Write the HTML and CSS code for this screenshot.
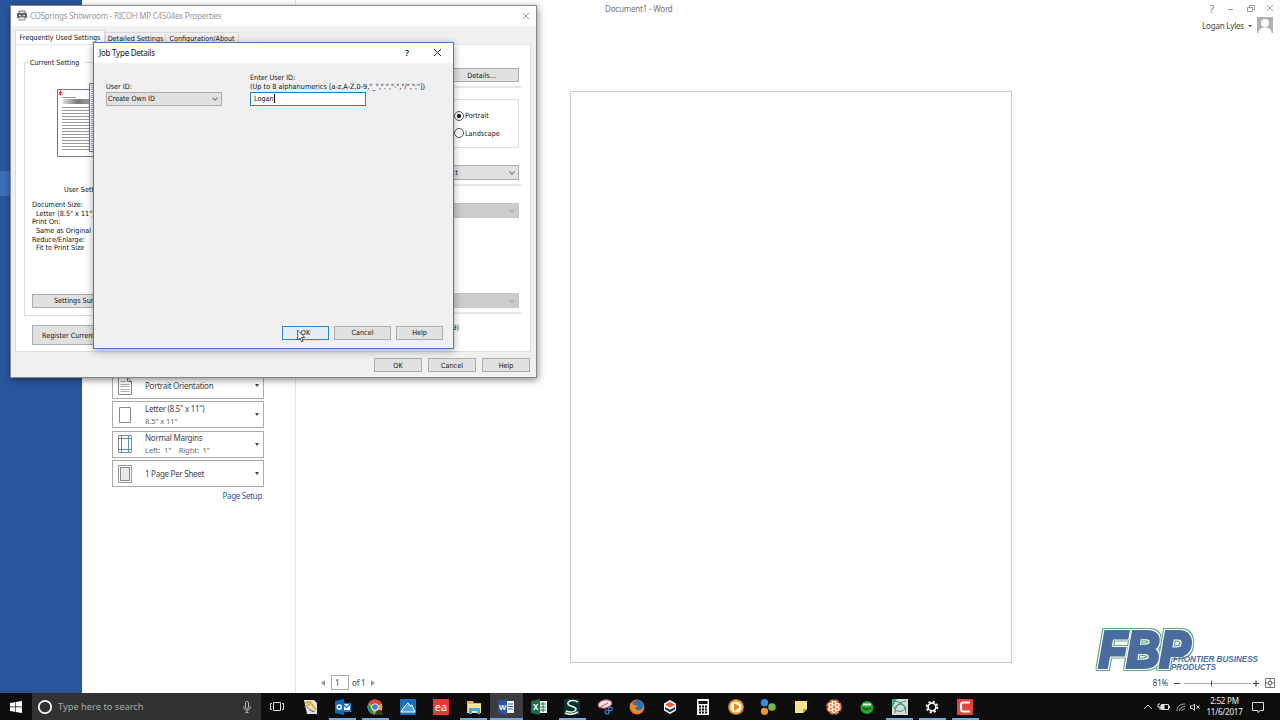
FILE: index.html
```
<!DOCTYPE html>
<html lang="en">

<head>
    <title>Document1 - Word</title>
    <meta http-equiv="content-type" content="text/html; charset=utf-8" />
    <link rel="stylesheet" href="styles.css">
</head>

<body>
    <div class="word">
        <div class="sidebar"><div class="sidebar-sel"></div></div>

        <div class="settings">
            <div class="opt">
                <svg width="16" height="20" viewBox="0 0 16 20"><path d="M1.500 1.500h9l4 4v13h-13z" fill="#fff" stroke="#888"/><path d="M10.500 1.500v4h4" fill="none" stroke="#777"/><path d="M3.500 5.500h5M3.500 8.500h9M3.500 10.500h9M3.500 13.500h9M3.500 15.500h9" stroke="#aaa"/></svg>
                <div class="opt-text">Portrait Orientation</div>
                <i class="arrow"></i>
            </div>
            <div class="opt">
                <svg width="16" height="20" viewBox="0 0 16 20"><path d="M2.500 2.500h11v15h-11z" fill="#fff" stroke="#8a8a8a"/></svg>
                <div class="opt-text">Letter (8.5" x 11")<small>8.5" x 11"</small></div>
                <i class="arrow"></i>
            </div>
            <div class="opt">
                <svg width="16" height="20" viewBox="0 0 16 20"><path d="M1.500 1.500h13v17h-13z" fill="#fff" stroke="#8a8a8a"/><path d="M4.500 1v18M11.500 1v18M1 4.500h14M1 15.500h14" stroke="#5b88b5"/></svg>
                <div class="opt-text">Normal Margins<small>Left:&nbsp; 1"&nbsp;&nbsp;&nbsp; Right:&nbsp; 1"</small></div>
                <i class="arrow"></i>
            </div>
            <div class="opt">
                <svg width="16" height="20" viewBox="0 0 16 20"><path d="M1.500 1.500h13v17h-13z" fill="#fff" stroke="#999"/><path d="M3.500 3.500h9v13h-9z" fill="#e8e8e8" stroke="#888"/></svg>
                <div class="opt-text">1 Page Per Sheet</div>
                <i class="arrow"></i>
            </div>
            <div class="page-setup">Page Setup</div>
        </div>

        <div class="preview">
            <div class="word-title">
                <span class="doc-name">Document1 - Word</span>
                <span class="help">?</span>
                <svg width="50" height="10" viewBox="0 0 50 10" fill="none" stroke="#999"><path d="M1 5.500h5M20.500 3.500h5v4h-5zM22.500 3.500v-2h5v4h-2M40 1l6 6M46 1l-6 6"/></svg>
            </div>
            <div class="account">
                <span>Logan Lyles</span>
                <i class="arrow small"></i>
                <svg width="16" height="16" viewBox="0 0 16 16"><path d="M0 0h16v16H0z" fill="#b1b1b1"/><circle cx="8" cy="6" r="3.900" fill="#fff"/><path d="M1.500 16c0-4 3-5.500 6.500-5.500s6.500 1.500 6.500 5.500z" fill="#fff"/></svg>
            </div>
            <div class="paper"></div>
            <svg class="brand" width="168" height="46" viewBox="0 0 168 46">
                <defs>
                    <filter id="outline" x="-10%" y="-10%" width="120%" height="120%" color-interpolation-filters="sRGB">
                        <feMorphology in="SourceAlpha" operator="dilate" radius="2" result="big"/>
                        <feMorphology in="SourceAlpha" operator="dilate" radius="1" result="mid"/>
                        <feFlood flood-color="#5fa982"/><feComposite in2="big" operator="in" result="green"/>
                        <feFlood flood-color="#fff"/><feComposite in2="mid" operator="in" result="white"/>
                        <feMerge><feMergeNode in="green"/><feMergeNode in="white"/><feMergeNode in="SourceGraphic"/></feMerge>
                    </filter>
                </defs>
                <text class="brand-big" x="5" y="39.500" textLength="91" lengthAdjust="spacingAndGlyphs" filter="url(#outline)">FBP</text>
                <text class="brand-sub" x="79" y="35" textLength="85" lengthAdjust="spacingAndGlyphs">FRONTIER BUSINESS</text>
                <text class="brand-sub" x="77" y="43" textLength="45" lengthAdjust="spacingAndGlyphs">PRODUCTS</text>
            </svg>
            <div class="status">
                <i class="tri left"></i><span class="page-no">1</span><span>of 1</span><i class="tri"></i>
                <span class="zoom">81%</span>
                <svg width="96" height="12" viewBox="0 0 96 12"><path d="M0 6.500h6M79 6.500h6M82 3.500v6" stroke="#444" stroke-width="1.200"/><path d="M10 6.500h67" stroke="#aaa"/><path d="M37.500 3.500v6" stroke="#555"/></svg>
                <svg width="10" height="10" viewBox="0 0 10 10"><path d="M.5.500h9v9h-9z" fill="#fff" stroke="#777"/><path d="M3.500 3.500h3v3h-3zM5 1v2M5 7v2M1 5h2M7 5h2" stroke="#777" fill="none"/></svg>
            </div>
        </div>
    </div>

    <!-- printer properties -->
    <div class="win props">
        <div class="win-title">
            <svg width="12" height="11" viewBox="0 0 12 11"><path d="M3 1h6v3H3z" fill="#ddd" stroke="#777"/><path d="M1 3h10v5H1z" fill="#666"/><path d="M3 7h6v3H3z" fill="#eee" stroke="#888"/><path d="M3 5.500h2M7 5.500h2" stroke="#ddd"/></svg>
            <span>COSprings Showroom - RICOH MP C4504ex Properties</span>
            <svg width="8" height="8" viewBox="0 0 8 8"><path d="M1 1l6 6M7 1l-6 6" stroke="#999"/></svg>
        </div>
        <div class="tabs">
            <div class="tab active">Frequently Used Settings</div>
            <div class="tab t2">Detailed Settings</div>
            <div class="tab t3">Configuration/About</div>
        </div>
        <div class="panel">
            <div class="panel-left">
                <div class="group">
                    <div class="legend">Current Setting</div>
                    <svg class="thumb" width="60" height="76" viewBox="0 0 60 76">
                        <defs><linearGradient id="bar"><stop offset="0" stop-color="#ddd"/><stop offset=".5" stop-color="#777"/><stop offset="1" stop-color="#aaa"/></linearGradient></defs>
                        <path d="M.5 6.500h50v67H.5z" fill="#fff" stroke="#77778c"/>
                        <path d="M5 14.500h14" stroke="#999"/>
                        <path d="M6 16h30v5H6z" fill="url(#bar)"/>
                        <path d="M5 24.500h27M5 27.500h27M5 30.500h27M5 33.500h27M5 36.500h27M5 39.500h27M5 42.500h27M5 45.500h27M5 48.500h27M5 51.500h27M5 54.500h27M5 57.500h27M5 60.500h27M5 63.500h27M5 66.500h27" stroke="#9a9a9a"/>
                        <path d="M3.500 7.500v5M1.500 9l4 2.500M5.500 9l-4 2.500" stroke="#d33"/>
                        <path d="M32.500.5h20v68h-20z" fill="#fff" stroke="#778"/>
                        <path d="M35 2v66" stroke="#3b78c4" stroke-dasharray="1 1"/>
                    </svg>
                    <div class="user-set">User Setting</div>
                    <dl>
                        <dt>Document Size:</dt><dd>Letter (8.5" x 11")</dd>
                        <dt>Print On:</dt><dd>Same as Original Size</dd>
                        <dt>Reduce/Enlarge:</dt><dd>Fit to Print Size</dd>
                    </dl>
                    <div class="btn summary">Settings Summary...</div>
                </div>
                <div class="btn register">Register Current Settings...</div>
            </div>
            <div class="panel-right">
                <div class="btn details">Details...</div>
                <hr>
                <div class="orient">
                    <div class="radio on">Portrait</div>
                    <div class="radio">Landscape</div>
                </div>
                <div class="select s1"><span>Select</span><i class="chev"></i></div>
                <hr>
                <div class="select off s2"><i class="chev"></i></div>
                <div class="select off s3"><i class="chev"></i></div>
                <hr>
                <div class="copies">(1 to 999)</div>
            </div>
        </div>
        <div class="buttons">
            <div class="btn">OK</div>
            <div class="btn">Cancel</div>
            <div class="btn">Help</div>
        </div>
    </div>

    <!-- job type details -->
    <div class="win job">
        <div class="win-title">
            <span>Job Type Details</span>
            <b>?</b>
            <svg width="9" height="9" viewBox="0 0 9 9"><path d="M1 1l7 7M8 1l-7 7" stroke="#222"/></svg>
        </div>
        <div class="fields">
            <div class="field">
                <label>User ID:</label>
                <div class="select"><span>Create Own ID</span><i class="chev"></i></div>
            </div>
            <div class="field">
                <label>Enter User ID:<br><span class="hint">(Up to 8 alphanumerics [a-z,A-Z,0-9,"_",".","-","/",":"])</span></label>
                <div class="input">Logan</div>
            </div>
        </div>
        <div class="buttons">
            <div class="btn focus">OK</div>
            <div class="btn wide">Cancel</div>
            <div class="btn">Help</div>
        </div>
    </div>
    <svg class="cursor" width="9" height="14" viewBox="0 0 9 14"><path d="M.7 1v10l2.200-2 1.700 3.900 1.700-.8-1.700-3.600h3.200z" fill="#fff" stroke="#333" stroke-width=".8"/></svg>

    <div class="taskbar">
        <div class="start"><svg width="12" height="12" viewBox="0 0 12 12"><path d="M0 2l5-.8v4.400H0zM5.600 1.100L12 0v5.600H5.600zM0 6.200h5v4.500L0 10zM5.600 6.200H12V12l-6.400-1z" fill="#fff"/></svg></div>
        <div class="search">
            <svg width="16" height="16" viewBox="0 0 16 16"><circle cx="8" cy="8" r="6.200" fill="none" stroke="#fff" stroke-width="1.700"/></svg>
            <span>Type here to search</span>
            <svg width="8" height="12" viewBox="0 0 8 12" fill="none" stroke="#bbb"><rect x="2.500" y=".5" width="3" height="7" rx="1.200"/><path d="M.7 5.500c0 5 6.600 5 6.600 0M4 9v2.500M2.500 11.500h3"/></svg>
        </div>
        <div class="apps">
            <div class="app"><svg viewBox="0 0 16 16"><path d="M4.500 3.500h7v8h-7zM3 4.500H1.500v6H3M13 4.500h1.500v6H13" fill="none" stroke="#ddd"/></svg></div>
            <div class="app"><svg viewBox="0 0 16 16"><path d="M2 1h10l3 3v11H5z" fill="#e6e2dc"/><path d="M3 4l5-1 6 8M3 8l5-3" stroke="#e8a52a" stroke-width="2" fill="none"/><path d="M5 8l6 5M8 11l5 2" stroke="#776"/></svg></div>
            <div class="app run"><svg viewBox="0 0 16 16"><path d="M6 4h10v9H6z" fill="#1c7bd0"/><path d="M8 5h7v6H8z" fill="#fff"/><path d="M8 5l3.500 3.500L15 5" stroke="#1c7bd0" stroke-width="1.500" fill="none"/><path d="M0 2l9-2v16l-9-2z" fill="#0b6cc0"/><circle cx="4.300" cy="8" r="2.100" fill="none" stroke="#fff" stroke-width="1.500"/></svg></div>
            <div class="app run"><svg viewBox="0 0 16 16"><circle cx="8" cy="8" r="7.500" fill="#ddae29"/><path d="M1.500 4.200a7.500 7.500 0 0 1 13 0L8 8z" fill="#dc4638"/><path d="M1.500 4.200L6 12l2 3.500A7.500 7.500 0 0 1 1.500 4.200z" fill="#25985a"/><path d="M8 4.500h6.700L8 8z" fill="#dc4638"/><circle cx="8" cy="8" r="3.600" fill="#fff"/><circle cx="8" cy="8" r="2.800" fill="#3a80da"/><path d="M8 15c1-5 7-5 8-1v2H8z" fill="#3b302a"/></svg></div>
            <div class="app"><svg viewBox="0 0 16 16"><rect width="16" height="16" rx="1" fill="#1672b9"/><path d="M1 13l3-5 4-4 2 3 2-1 3 7z" fill="#4aa3dd" stroke="#fff"/></svg></div>
            <div class="app"><svg viewBox="0 0 16 16"><path d="M0 0h16v16H0z" fill="#e23b36"/><text x="8" y="11.500" text-anchor="middle" font-size="11" fill="#fff">ea</text></svg></div>
            <div class="app run"><svg viewBox="0 0 16 16"><path d="M1 2h6l1 2h7v10H1z" fill="#e9b94d"/><path d="M2 5h13v9H2z" fill="#fbe596"/><path d="M3 9h11v6h-3v-3H6v3H3z" fill="#4aa6df"/></svg></div>
            <div class="app run current"><svg viewBox="0 0 16 16"><path d="M8 2h8v12H8z" fill="#fff"/><path d="M10 5h5M10 7.500h5M10 10h5" stroke="#2b579a"/><path d="M0 2l9-2v16l-9-2z" fill="#2b579a"/><text x="4.600" y="11" text-anchor="middle" font-size="7.500" font-weight="700" fill="#fff">W</text></svg></div>
            <div class="app"><svg viewBox="0 0 16 16"><path d="M8 2h8v12H8z" fill="#fff"/><path d="M9 5h6M9 8h6M9 11h6M12 3v10" stroke="#217346"/><path d="M0 2l9-2v16l-9-2z" fill="#1d7044"/><text x="4.600" y="11" text-anchor="middle" font-size="8" font-weight="700" fill="#fff">X</text></svg></div>
            <div class="app run"><svg viewBox="0 0 16 16"><path d="M0 0h16v16H0z" fill="#093330"/><path d="M14 3C9 0 3 2 4 5s8 2 8 5-6 4-10 2M1 14c4 2 8 2 13-1" stroke="#e8f5f2" stroke-width="1.500" fill="none"/></svg></div>
            <div class="app"><svg viewBox="0 0 16 16"><ellipse cx="8" cy="5" rx="7" ry="4" fill="#f2e8ea" stroke="#c24a5a" transform="rotate(-12 8 5)"/><path d="M2 9l9-5" stroke="#c24a5a"/><circle cx="10" cy="13" r="2" fill="none" stroke="#3a8fd8" stroke-width="1.200"/><circle cx="13.500" cy="10" r="1.800" fill="none" stroke="#3a8fd8" stroke-width="1.200"/></svg></div>
            <div class="app"><svg viewBox="0 0 16 16"><circle cx="8" cy="8" r="7.500" fill="#e66b1e"/><circle cx="9" cy="6.500" r="5.500" fill="#2b71b8"/><path d="M1 5c2-1 3 0 4 1l4 1-3 2c2 4 6 3 9-2-.5 10-14 10-14-2z" fill="#f08a24"/></svg></div>
            <div class="app"><svg viewBox="0 0 16 16"><path d="M8 1l6 3.500v7L8 15l-6-3.500v-7z" fill="#fff"/><path d="M8 3l5 2.700L8 8.500 3 5.700z" fill="#e2613c"/><path d="M3 8l5 2.800L13 8v2.500L8 13.300l-5-2.800z" fill="#24365e"/></svg></div>
            <div class="app"><svg viewBox="0 0 16 16"><path d="M2 0h12v16H2z" fill="#f5f5f5"/><path d="M3.500 2h9v3h-9z" fill="#111"/><path d="M4 7.500h8M4 10.500h8M4 13.500h8" stroke="#111" stroke-width="1.800" stroke-dasharray="2 1"/></svg></div>
            <div class="app"><svg viewBox="0 0 16 16"><circle cx="8" cy="8" r="7.800" fill="#f29423"/><circle cx="8" cy="8" r="5.600" fill="#fff"/><path d="M6 4l6 4-6 4z" fill="#ee8416"/></svg></div>
            <div class="app"><svg viewBox="0 0 16 16"><circle cx="4.500" cy="3.800" r="3.700" fill="#2d8fdd"/><circle cx="12" cy="8" r="3.800" fill="#76b947"/><circle cx="4.500" cy="12.300" r="3.600" fill="#f0932d"/></svg></div>
            <div class="app"><svg viewBox="0 0 16 16"><path d="M2 2h12v8l-4 4H2z" fill="#f4e38e"/><path d="M10 14v-4h4z" fill="#b9a752"/></svg></div>
            <div class="app"><svg viewBox="0 0 16 16"><circle cx="8" cy="8" r="6.500" fill="#ed7a3c"/><circle cx="8" cy="8" r="6.500" fill="none" stroke="#ed7a3c" stroke-width="2.500" stroke-dasharray="4 1.100"/><g fill="none" stroke="#fff" stroke-width="1.200"><circle cx="8" cy="4.200" r="1.800"/><circle cx="8" cy="11.800" r="1.800"/><circle cx="4.700" cy="6.100" r="1.800"/><circle cx="11.300" cy="6.100" r="1.800"/><circle cx="4.700" cy="9.900" r="1.800"/><circle cx="11.300" cy="9.900" r="1.800"/></g></svg></div>
            <div class="app"><svg viewBox="0 0 16 16"><circle cx="8" cy="8.500" r="6.500" fill="#23a632"/><path d="M4 5.500h8" stroke="#dff5df" stroke-width="2"/><path d="M4 9l3 1.500L12 9" stroke="#0e5a18" stroke-width="1.500" fill="none"/></svg></div>
            <div class="app run"><svg viewBox="0 0 16 16"><path d="M0 0h16v16H0z" fill="#d6dcd9"/><path d="M2 2c8 1 11 4 12 12M14 2C7 3 3 7 3 14M2 9c4-5 9-5 12 0-3 4-9 5-12 0z" fill="none" stroke="#368c75"/><path d="M0 0h5L0 9z" fill="#39ac82"/></svg></div>
            <div class="app run"><svg viewBox="0 0 16 16"><circle cx="8" cy="8" r="3.900" fill="none" stroke="#fff" stroke-width="1.700"/><circle cx="8" cy="8" r="5.400" fill="none" stroke="#fff" stroke-width="1.800" stroke-dasharray="2.100 2.141"/></svg></div>
            <div class="app run"><svg viewBox="0 0 16 16"><rect width="16" height="16" rx="1" fill="#e8443c"/><path d="M13 3.500H6.500Q4 3.500 4 6v4q0 2.500 2.500 2.500H13" fill="none" stroke="#fff" stroke-width="2.200"/></svg></div>
        </div>
        <div class="tray">
            <svg width="60" height="12" viewBox="0 0 60 12" fill="none" stroke="#ddd"><path d="M2 8l4-4 4 4M19.500 3.500h7v5h-7zM27.500 5v2M16 3v3h3M17 2v2M18 6v3"/><path d="M19 4h3v4h-3z" fill="#ddd"/><path d="M35 10C35 5 38 3 43 3M37.500 10c0-3 2-4.500 5.500-4.500M40 10c0-1.500 1-2 3-2" stroke="#aaa"/><path d="M48.500 5h2l2-2v6.500l-2-2h-2zM54.500 4.500l3 3M57.500 4.500l-3 3"/></svg>
            <div class="clock">2:52 PM<br>11/6/2017</div>
            <svg width="12" height="12" viewBox="0 0 12 12"><path d="M.5 1.500h11v8h-3l-2.500 2v-2H.5z" fill="none" stroke="#ddd"/></svg>
        </div>
    </div>
</body>

</html>
```
FILE: styles.css
```
* {
    box-sizing: border-box;
}

body {
    margin: 0;
    width: 1280px;
    height: 720px;
    overflow: hidden;
    display: flex;
    flex-direction: column;
    background: #fefefe;
    font-family: "Noto Sans", sans-serif;
    font-size: 8px;
    letter-spacing: -.2px;
    color: #444;
    white-space: nowrap;
}

svg {
    display: block;
    flex: none;
    letter-spacing: 0;
}

/* word backstage */
.word {
    height: 693px;
    display: flex;
}

.sidebar {
    width: 82px;
    background: #28559c;
    padding-top: 171px;
}

.sidebar-sel {
    height: 25px;
    background: #3e6db8;
}

.settings {
    width: 214px;
    border-right: 1px solid #e3e3e3;
    padding: 372px 31px 0 30px;
    display: flex;
    flex-direction: column;
    gap: 2.4px;
}

.opt {
    height: 27px;
    border: 1px solid #ababab;
    display: flex;
    align-items: center;
    padding: 0 4px;
    background: #fff;
}

.opt-text {
    flex: 1;
    padding-left: 12px;
    font-size: 8px;
    letter-spacing: -.27px;
    line-height: 13px;
}

.opt-text small {
    display: block;
    font-size: 7.6px;
    letter-spacing: -.1px;
    color: #666;
}

.arrow {
    border: 2.5px solid transparent;
    border-top: 3px solid #444;
    border-bottom: 0;
}

.arrow.small {
    border-width: 2px;
    border-top-width: 2.5px;
    border-bottom: 0;
    margin: 1px 5px 0 4px;
}

.page-setup {
    text-align: right;
    padding: 0 2px;
    letter-spacing: -.3px;
    color: #2b579a;
}

.preview {
    flex: 1;
    display: flex;
    flex-direction: column;
}

.word-title {
    height: 17px;
    display: flex;
    align-items: center;
    padding: 0 3px 0 309px;
    color: #777;
}

.help {
    margin-left: auto;
    margin-right: 13px;
    font-size: 10px;
}

.account {
    height: 16px;
    display: flex;
    align-items: center;
    justify-content: flex-end;
    padding-right: 7px;
}

.paper {
    width: 442px;
    height: 572px;
    margin: 58px 0 0 274px;
    border: 1px solid #cacaca;
}

.brand {
    position: absolute;
    left: 1094px;
    top: 627px;
    overflow: visible;
}

.brand-big {
    font: italic bold 50px "Liberation Sans", sans-serif;
    fill: #4b6c9f;
    stroke: #4b6c9f;
    stroke-width: 4px;
}

.brand-sub {
    font: italic bold 8.5px "Liberation Sans Narrow", "Liberation Sans", sans-serif;
    fill: #4b6c9f;
}

.status {
    margin-top: auto;
    height: 20px;
    display: flex;
    align-items: center;
    padding: 0 5px 1px 25px;
}

.page-no {
    width: 18px;
    height: 15px;
    border: 1px solid #aaa;
    margin: 0 3px 0 6px;
    padding-left: 3px;
    line-height: 13px;
}

.tri {
    border: 3px solid transparent;
    border-left: 4px solid #999;
    border-right: 0;
    margin-left: 6px;
}

.tri.left {
    border-left: 0;
    border-right: 4px solid #999;
    margin-left: 0;
}

.zoom {
    margin-left: auto;
    margin-right: 6px;
}

.status svg:last-child {
    margin-left: -5px;
}

/* dialogs */
.win {
    position: absolute;
    background: #f0f0f0;
    display: flex;
    flex-direction: column;
    font-family: "DejaVu Sans Condensed", "DejaVu Sans", sans-serif;
    font-stretch: condensed;
    font-size: 7.2px;
    letter-spacing: 0;
    line-height: 9px;
    color: #111;
}

.win-title {
    height: 20px;
    background: #fff;
    display: flex;
    align-items: center;
    font: 8px "Noto Sans", sans-serif;
    letter-spacing: -.24px;
    padding-bottom: 1px;
}

.btn {
    width: 48px;
    height: 14px;
    border: 1px solid #adadad;
    background: #e1e1e1;
    display: flex;
    align-items: center;
    justify-content: center;
}

.buttons {
    display: flex;
    justify-content: flex-end;
}

.select {
    height: 15px;
    border: 1px solid #adadad;
    background: #e1e1e1;
    display: flex;
    align-items: center;
    justify-content: space-between;
    padding: 0 4px 0 1px;
}

.select.off {
    background: #ccc;
    border-color: #c6c6c6;
    justify-content: flex-end;
}

.chev {
    width: 4px;
    height: 4px;
    border: solid #777;
    border-width: 0 1px 1px 0;
    transform: translateY(-1px) rotate(45deg);
}

.off .chev {
    border-color: #aaa;
}

.props {
    left: 10px;
    top: 5px;
    width: 527px;
    height: 373px;
    border: 1px solid #888;
    box-shadow: 1px 2px 7px rgba(0, 0, 0, .45);
}

.props .win-title {
    padding: 0 6px 1px 5px;
    color: #999;
}

.props .win-title span {
    flex: 1;
    padding-left: 2px;
}

.tabs {
    height: 18px;
    display: flex;
    align-items: flex-end;
    padding-left: 4px;
}

.tab {
    height: 12px;
    border: 1px solid #d9d9d9;
    border-bottom: 0;
    text-align: center;
    line-height: 12px;
}

.tab.active {
    width: 90px;
    height: 14px;
    background: #fff;
    line-height: 14px;
}

.t2 {
    width: 61px;
}

.t3 {
    width: 73px;
    border-left: 0;
}

.panel {
    height: 308px;
    width: 516px;
    margin-left: 4px;
    border: 1px solid #dcdcdc;
    border-top-color: #e4e4e4;
    background: #fff;
    display: flex;
    justify-content: space-between;
}

.panel-left {
    width: 230px;
    padding: 17px 0 0 8px;
}

.group {
    height: 254px;
    border: 1px solid #dcdcdc;
}

.legend {
    width: 55px;
    margin: -5px 0 0 4px;
    background: #fff;
    padding-left: 1px;
}

.thumb {
    margin: 16px 0 0 32px;
}

.user-set {
    margin: 26px 0 0 39px;
}

dl {
    margin: 7px 0 0 7px;
    line-height: 8.65px;
}

dd {
    margin: 0 0 0 4px;
}

.summary {
    width: 130px;
    height: 14px;
    margin: 41px 0 0 7px;
    justify-content: flex-start;
    padding-left: 21px;
}

.register {
    width: 130px;
    height: 20px;
    margin: 9px 0 0 8px;
    justify-content: flex-start;
    padding-left: 9px;
}

.panel-right {
    width: 124px;
    padding: 23px 9px 0 0;
}

.panel-right hr {
    border: 0;
    height: 2px;
    background: #e6e6e6;
    margin: 4px 0 0;
}

.details {
    width: 75px;
    margin: 0 0 0 38px;
}

.orient {
    height: 49px;
    margin: 11px 2px 0 0;
    border: 1px solid #dcdcdc;
    padding: 11px 0 0 47px;
}

.radio {
    display: flex;
    align-items: center;
    height: 9px;
    gap: 1px;
    margin-bottom: 8.5px;
}

.radio::before {
    content: "";
    width: 8px;
    height: 8px;
    border: 1px solid #555;
    border-radius: 50%;
    background: #fff;
}

.radio.on::before {
    background: radial-gradient(#222 1.8px, #fff 2.5px);
}

.panel-right .select {
    margin-right: 2px;
}

.s1 {
    margin-top: 17px;
}

.s1 span {
    padding-left: 30px;
}

.s2 {
    margin-top: 17px;
}

.s3 {
    margin-top: 75px;
}

.copies {
    margin: 9px 0 0 21px;
}

.props .buttons {
    gap: 6px;
    padding: 6px 6px 0 0;
}

.job {
    left: 93px;
    top: 42px;
    width: 361px;
    height: 307px;
    border: 1px solid #3f7fc0;
    box-shadow: 0 2px 8px rgba(0, 0, 0, .35);
}

.job .win-title {
    padding: 0 11px 1px 5px;
    color: #111;
}

.job .win-title b {
    margin-left: auto;
    margin-right: 24px;
    font-size: 9px;
    font-weight: 600;
}

.fields {
    display: flex;
    align-items: flex-end;
    gap: 28px;
    padding: 11px 0 0 12px;
}

.field .select,
.input {
    width: 116px;
    height: 14px;
}

.field label {
    display: block;
    line-height: 8.6px;
    padding-bottom: .8px;
}

.hint {
    letter-spacing: .04px;
}

.input {
    border: 1px solid #2b7fc4;
    background: #fff;
    padding-left: 3px;
    line-height: 12px;
}

.input::after {
    content: "";
    display: inline-block;
    height: 9px;
    border-right: 1px solid #000;
    vertical-align: -2px;
}

.job .buttons {
    margin-top: auto;
    padding: 0 10px 8px 0;
    gap: 5px;
}

.job .btn {
    width: 47px;
    padding-bottom: 1px;
}

.job .btn.wide {
    width: 57px;
}

.job .focus {
    border: 1.5px solid #2a86d0;
    background: #e5edf5;
}

.cursor {
    position: absolute;
    left: 297px;
    top: 329px;
}

/* taskbar */
.taskbar {
    height: 27px;
    background: #0d0d0e;
    display: flex;
    align-items: center;
    color: #eee;
}

.start {
    width: 32px;
    padding-left: 10px;
}

.search {
    width: 229px;
    height: 27px;
    background: #323233;
    display: flex;
    align-items: center;
    padding: 0 10px 0 5px;
    color: #aaa;
    font-size: 9.3px;
    letter-spacing: 0;
}

.search span {
    flex: 1;
    padding-left: 5px;
}

.apps {
    display: flex;
}

.app {
    width: 32.77px;
    height: 27px;
    padding: 6px 8px 0;
}

.app svg {
    width: 16px;
    height: 16px;
}

.run {
    background: linear-gradient(#74a9dc, #74a9dc) no-repeat 50% 100% / 27px 2px;
}

.current {
    background-color: #3c3c40;
    background-size: 100% 2px;
}

.tray {
    margin-left: auto;
    display: flex;
    align-items: center;
    padding-right: 16px;
}

.clock {
    width: 50px;
    padding: 0 5px 1px 0;
    text-align: center;
    line-height: 11px;
}
```
